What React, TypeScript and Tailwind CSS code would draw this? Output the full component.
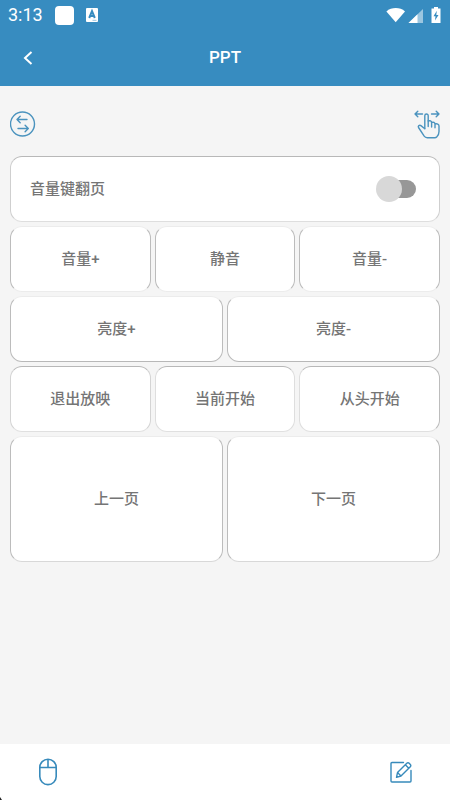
import { useState, type ReactNode } from "react"
import clsx from "clsx"

const StatusBar = () => (
    <div className="flex h-[30px] items-center justify-between px-2 text-white">
        <div className="flex items-center">
            <span className="text-lg font-normal leading-[30px]">3:13</span>
            <span className="ml-3 size-[19px] rounded bg-white" />
            <svg className="ml-3" width="12" height="14" viewBox="0 0 12 14" aria-hidden="true">
                <rect width="12" height="14" rx="1" fill="#fff" />
                <path d="M3.2 10 6 3.200l2.800 6.800M4.200 7.900h3.600" fill="none" stroke="#378cc0" strokeWidth="2" />
                <path d="M6.500 12.300h4" stroke="#9cc5df" strokeWidth="1" />
            </svg>
        </div>
        <svg width="56" height="18" viewBox="0 0 56 18" aria-hidden="true">
            <path d="M.4 5.400C5.600 1 14 1 19 5.400L9.700 16.200z" fill="#fff" />
            <path d="M37 3v14H22.500z" fill="#fff" opacity=".5" />
            <path d="M31.500 8.300V17h-9z" fill="#fff" />
            <path d="M48 2.500V1h4v1.500h2.500V17h-9V2.500z" fill="#fff" />
            <path d="m50.800 4.800-3.300 5.400h2l-.5 4.400 3.500-5.600h-2.200z" fill="#378cc0" />
        </svg>
    </div>
)

const SwapIcon = () => (
    <svg width="26" height="26" viewBox="0 0 26 26" fill="none" stroke="#4b93be" strokeWidth="1.400" strokeLinecap="round" strokeLinejoin="round" aria-hidden="true">
        <circle cx="12.500" cy="13" r="12" />
        <path d="M17 8.500H7M10.200 5.300 7 8.500l3.200 3.200M8 17.500h10.300M15.100 14.300l3.200 3.200-3.200 3.200" />
    </svg>
)

const SwipeIcon = () => (
    <svg width="26" height="30" viewBox="0 0 26 30" fill="none" stroke="#4b93be" strokeWidth="1.400" strokeLinecap="round" strokeLinejoin="round" aria-hidden="true">
        <path d="M8.500 5H1M3.800 2.200 1 5l2.800 2.800M17.500 5H25M22.200 2.200 25 5l-2.800 2.800" />
        <path d="M10.800 19.500V6.700a1.700 1.700 0 0 1 3.400 0V17.500" />
        <path d="M14.200 12c1.800-.7 3.400.1 3.400 1.700v4.300M17.600 13.500c1.800-.7 3.400.1 3.400 1.700v3.500M21 15c2-.7 4 .1 4 2v5.500c0 2.500-.8 4.200-2.300 5.500-.5.500-1.100.7-1.900.7h-7.600c-1.300 0-2.300-.5-3-1.500l-5.700-8.700c-.8-1.400 1-3 2.400-1.900l3.900 3.200" />
    </svg>
)

const MouseIcon = () => (
    <svg width="20" height="28" viewBox="0 0 20 28" fill="none" stroke="#378abb" strokeWidth="1.600" aria-hidden="true">
        <rect x="1.800" y="1.200" width="16.400" height="25.400" rx="8.200" />
        <path d="M1.800 9.500h16.400M10 1.200v8.300" />
    </svg>
)

const EditIcon = () => (
    <svg width="22" height="22" viewBox="0 0 22 22" fill="none" stroke="#378abb" strokeWidth="1.400" strokeLinecap="round" strokeLinejoin="round" aria-hidden="true">
        <path d="M13.500 1.500H2a1 1 0 0 0-1 1V20a1 1 0 0 0 1 1h18a1 1 0 0 0 1-1V9.500" />
        <path d="m6.500 16.300 1-4.700 9.300-9.300c.7-.7 1.700-.7 2.400 0l1.100 1.100c.7.7.7 1.700 0 2.400L11 15.100zM15.300 3.800l3.500 3.500M7.500 11.600l3.500 3.500" />
    </svg>
)

const KeyButton = ({ className, children }: { className?: string; children: ReactNode }) => (
    <button type="button" className={clsx("rounded-xl border bg-white text-center", className)}>
        {children}
    </button>
)

const App = () => {
    const [volumePaging, setVolumePaging] = useState(false)

    return (
        <div className="relative flex min-h-screen flex-col bg-[#f5f5f5] font-['Roboto','Noto_Sans_CJK_SC',sans-serif] text-[15px] font-medium text-[#757575]">
            <header className="bg-[#378cc0] text-white">
                <StatusBar />
                <div className="grid h-14 grid-cols-3 items-center px-4">
                    <button type="button" aria-label="返回" className="flex size-6 items-center justify-center">
                        <svg width="10" height="14" viewBox="0 0 10 14" fill="none" stroke="currentColor" strokeWidth="2" aria-hidden="true">
                            <path d="M8.500 1 2 7l6.500 6" />
                        </svg>
                    </button>
                    <h1 className="text-center text-[17px]">PPT</h1>
                </div>
            </header>

            <main className="flex-1 px-2.5 pb-6">
                <div className="flex h-[70px] items-center justify-between pt-1.5">
                    <button type="button" aria-label="切换"><SwapIcon /></button>
                    <button type="button" aria-label="手势"><SwipeIcon /></button>
                </div>

                <div className="flex flex-col gap-1">
                    <label className="flex h-[66px] items-center justify-between rounded-xl border border-x-[#cfcfcf] border-b-[#dedede] border-t-[#b8b8b8] bg-white pl-[19px] pr-[23px]">
                        <span>音量键翻页</span>
                        <input
                            type="checkbox"
                            role="switch"
                            checked={volumePaging}
                            onChange={(e) => setVolumePaging(e.target.checked)}
                            className="relative h-[26px] w-10 appearance-none before:absolute before:left-1 before:top-1 before:h-[18px] before:w-9 before:rounded-full before:bg-[#979797] after:absolute after:left-0 after:top-0 after:size-[26px] after:rounded-full after:bg-[#d8d8d8] checked:before:bg-[#9bc5df] checked:after:left-3.5 checked:after:bg-[#378cc0]"
                        />
                    </label>

                    <div className="grid h-[66px] grid-cols-3 gap-1">
                        <KeyButton className="border-x-[#bcbcbc] border-y-[#ececec]">音量+</KeyButton>
                        <KeyButton className="border-x-[#bcbcbc] border-y-[#ececec]">静音</KeyButton>
                        <KeyButton className="border-x-[#bcbcbc] border-y-[#ececec]">音量-</KeyButton>
                    </div>

                    <div className="grid h-[66px] grid-cols-2 gap-1">
                        <KeyButton className="border-x-[#bcbcbc] border-b-[#b8b8b8] border-t-[#ececec]">亮度+</KeyButton>
                        <KeyButton className="border-x-[#bcbcbc] border-b-[#b8b8b8] border-t-[#ececec]">亮度-</KeyButton>
                    </div>

                    <div className="grid h-[66px] grid-cols-3 gap-1">
                        <KeyButton className="border-x-[#d4d4d4] border-b-[#e0e0e0] border-t-[#b8b8b8]">退出放映</KeyButton>
                        <KeyButton className="border-x-[#dedede] border-b-[#e0e0e0] border-t-[#b8b8b8]">当前开始</KeyButton>
                        <KeyButton className="border-b-[#e0e0e0] border-l-[#dedede] border-r-[#bcbcbc] border-t-[#b8b8b8]">从头开始</KeyButton>
                    </div>

                    <div className="grid h-[126px] grid-cols-2 gap-1">
                        <KeyButton className="border-x-[#bcbcbc] border-b-[#d8d8d8] border-t-[#ececec]">上一页</KeyButton>
                        <KeyButton className="border-x-[#bcbcbc] border-b-[#d8d8d8] border-t-[#ececec]">下一页</KeyButton>
                    </div>
                </div>
            </main>

            <footer className="flex h-14 items-center justify-between bg-white px-[38px]">
                <button type="button" aria-label="鼠标"><MouseIcon /></button>
                <button type="button" aria-label="编辑"><EditIcon /></button>
            </footer>
            <svg className="absolute bottom-0 left-0" width="3" height="4" viewBox="0 0 3 4" aria-hidden="true">
                <path d="M0 1 2 4H0z" fill="#222" />
            </svg>
        </div>
    )
}

export default App
